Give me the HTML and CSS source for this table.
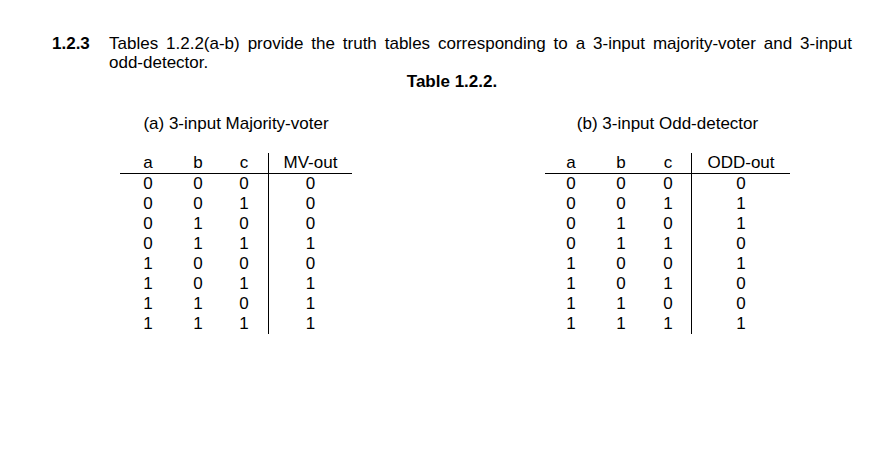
FILE: index.html
```html
<!DOCTYPE html>
<html>
<head>
<meta charset="utf-8">
<link rel="stylesheet" href="styles.css">
</head>
<body>
<div class="page">
  <div class="problem">
    <div class="num">1.2.3</div>
    <p class="text">Tables 1.2.2(a-b) provide the truth tables corresponding to a 3-input majority-voter and 3-input odd-detector.</p>
  </div>
  <div class="caption">Table 1.2.2.</div>
  <div class="tables">
    <div class="block">
      <div class="title">(a) 3-input Majority-voter</div>
      <table class="tt tt-a">
        <thead><tr><th>a</th><th>b</th><th>c</th><th class="out">MV-out</th></tr></thead>
        <tbody>
          <tr><td>0</td><td>0</td><td>0</td><td class="out">0</td></tr>
          <tr><td>0</td><td>0</td><td>1</td><td class="out">0</td></tr>
          <tr><td>0</td><td>1</td><td>0</td><td class="out">0</td></tr>
          <tr><td>0</td><td>1</td><td>1</td><td class="out">1</td></tr>
          <tr><td>1</td><td>0</td><td>0</td><td class="out">0</td></tr>
          <tr><td>1</td><td>0</td><td>1</td><td class="out">1</td></tr>
          <tr><td>1</td><td>1</td><td>0</td><td class="out">1</td></tr>
          <tr><td>1</td><td>1</td><td>1</td><td class="out">1</td></tr>
        </tbody>
      </table>
    </div>
    <div class="block">
      <div class="title">(b) 3-input Odd-detector</div>
      <table class="tt tt-b">
        <thead><tr><th>a</th><th>b</th><th>c</th><th class="out">ODD-out</th></tr></thead>
        <tbody>
          <tr><td>0</td><td>0</td><td>0</td><td class="out">0</td></tr>
          <tr><td>0</td><td>0</td><td>1</td><td class="out">1</td></tr>
          <tr><td>0</td><td>1</td><td>0</td><td class="out">1</td></tr>
          <tr><td>0</td><td>1</td><td>1</td><td class="out">0</td></tr>
          <tr><td>1</td><td>0</td><td>0</td><td class="out">1</td></tr>
          <tr><td>1</td><td>0</td><td>1</td><td class="out">0</td></tr>
          <tr><td>1</td><td>1</td><td>0</td><td class="out">0</td></tr>
          <tr><td>1</td><td>1</td><td>1</td><td class="out">1</td></tr>
        </tbody>
      </table>
    </div>
  </div>
</div>
</body>
</html>
```
FILE: styles.css
```css
html, body {
  margin: 0;
  padding: 0;
  background: #fff;
}
body {
  font-family: "Liberation Sans", Arial, sans-serif;
  font-size: 17px;
  line-height: 19px;
  color: #000;
}
.page {
  padding-top: 34px;
}
.problem {
  display: flex;
  padding-left: 52px;
}
.num {
  width: 57px;
  font-weight: bold;
  flex: none;
}
.text {
  margin: 0;
  width: 743px;
  text-align: justify;
}
.caption {
  width: 904px;
  text-align: center;
  font-weight: bold;
}
.tables {
  display: flex;
  gap: 193px;
  padding-left: 120px;
  margin-top: 23px;
}
.block {
  display: flex;
  flex-direction: column;
  align-items: center;
}
.title {
  margin-bottom: 20px;
}
.tt {
  border-collapse: collapse;
  font-size: 17px;
  line-height: 20px;
}
.tt th, .tt td {
  padding: 0;
  text-align: center;
  font-weight: normal;
  height: 20px;
}
.tt thead th {
  border-bottom: 1px solid #000;
}
.tt .out {
  border-left: 1px solid #000;
}
.tt-a th:nth-child(1) { width: 56px; }
.tt-a th:nth-child(2) { width: 44px; }
.tt-a th:nth-child(3) { width: 48px; }
.tt-a th:nth-child(4) { width: 83px; }
.tt-b th:nth-child(1) { width: 52px; }
.tt-b th:nth-child(2) { width: 48px; }
.tt-b th:nth-child(3) { width: 46px; }
.tt-b th:nth-child(4) { width: 98px; }
```
